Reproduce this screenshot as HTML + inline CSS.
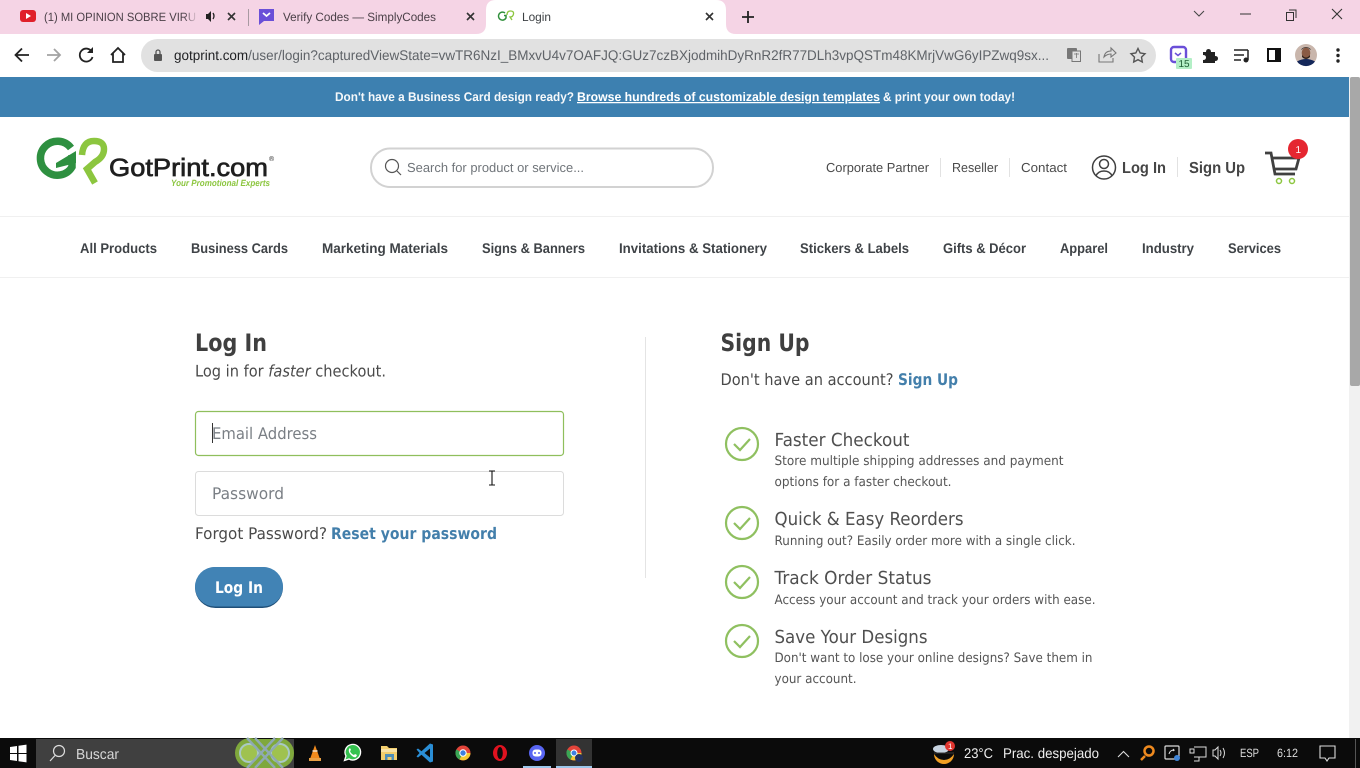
<!DOCTYPE html>
<html lang="es"><head><meta charset="utf-8"><title>Login</title>
<style>
html,body{margin:0;padding:0;width:1360px;height:768px;overflow:hidden;background:#fff}
svg{position:absolute;left:0;top:0;display:block}
text{white-space:pre}
.s{font-family:"Liberation Sans",sans-serif}
.d{font-family:"DejaVu Sans",sans-serif}
.n{font-family:"Liberation Sans",sans-serif;font-weight:700;font-size:14px;fill:#3f4347}
</style></head><body>
<svg width="1360" height="768" viewBox="0 0 1360 768" xmlns="http://www.w3.org/2000/svg" text-rendering="geometricPrecision">
<defs><linearGradient id="fade" x1="0" x2="1" y1="0" y2="0"><stop offset="0" stop-color="#f5d4e5" stop-opacity="0"/><stop offset="1" stop-color="#f5d4e5"/></linearGradient></defs>
<!-- tab strip -->
<rect width="1360" height="34" fill="#f5d4e5"/>
<path d="M476 34q10 0 10-10V10q0-10 10-10h220q10 0 10 10v14q0 10 10 10z" fill="#fff"/>
<rect x="20" y="10" width="16" height="12" rx="3" fill="#e0202a"/><path d="M26 13v6l5-3z" fill="#fff"/>
<text class="s" x="44" y="21" font-size="12" fill="#4b4048" textLength="152" lengthAdjust="spacingAndGlyphs">(1) MI OPINION SOBRE VIRU</text>
<rect x="184" y="8" width="14" height="18" fill="url(#fade)"/>
<path d="M206 14h2l3-3v11l-3-3h-2z" fill="#222"/><path d="M213 13q2 3 0 6" stroke="#222" fill="none" stroke-width="1.300"/>
<path d="M228 13l7 7m0-7l-7 7" stroke="#333" stroke-width="1.600"/>
<rect x="248" y="9" width="1" height="17" fill="#a89aa2"/>
<path d="M259 9h15v12h-10l-5 4z" fill="#6a4fd8"/><path d="M263 13l3.500 3 3.500-3" stroke="#fff" stroke-width="1.800" fill="none"/>
<text class="s" x="283" y="21" font-size="12" fill="#4b4048" textLength="153" lengthAdjust="spacingAndGlyphs">Verify Codes — SimplyCodes</text>
<path d="M467 13l7 7m0-7l-7 7" stroke="#333" stroke-width="1.600"/>
<path d="M505 13a4 4 0 1 0 1 5v-2.500h-2" stroke="#2f8f3a" stroke-width="1.500" fill="none"/><path d="M507 15q0-4 3.500-4t3 3-3.500 3l2 3" stroke="#8cc63f" stroke-width="1.300" fill="none"/>
<text class="s" x="522" y="21" font-size="12" fill="#3c4043" textLength="29" lengthAdjust="spacingAndGlyphs">Login</text>
<path d="M706 13l7 7m0-7l-7 7" stroke="#333" stroke-width="1.600"/>
<path d="M748 11v12m-6-6h12" stroke="#222" stroke-width="1.800"/>
<path d="M1194 11l5 5 5-5" stroke="#444" fill="none"/>
<path d="M1240 14h11" stroke="#333"/>
<path d="M1289 10h7v8M1286.500 12.500h7v8h-7z" stroke="#333" fill="none"/>
<path d="M1332 9l10 10m0-10l-10 10" stroke="#333" stroke-width="1.100"/>
<!-- toolbar -->
<rect y="34" width="1360" height="43" fill="#fff"/>
<path d="M29 55H16m6-6.500L15.500 55l6.500 6.500" stroke="#222" stroke-width="1.800" fill="none"/>
<path d="M47 55h13m-6-6 6 6-6 6" stroke="#a3a3a3" stroke-width="1.800" fill="none"/>
<path d="M92 52a6.500 6.500 0 1 0 .5 5" stroke="#222" stroke-width="1.800" fill="none"/><path d="M93 47v6h-6z" fill="#222"/>
<path d="M111 55l7-7 7 7m-12-1.500V62h10v-8.500" stroke="#222" stroke-width="1.800" fill="none"/>
<rect x="141" y="39" width="1015" height="33" rx="16.500" fill="#e1e1e1"/>
<rect x="154" y="54" width="8" height="7" rx="1" fill="#555"/><path d="M156 54v-2a2 2 0 0 1 4 0v2" stroke="#555" stroke-width="1.300" fill="none"/>
<text class="s" x="174" y="60" font-size="14" textLength="875" lengthAdjust="spacingAndGlyphs" fill="#5f6368"><tspan fill="#202124">gotprint.com</tspan>/user/login?capturedViewState=vwTR6NzI_BMxvU4v7OAFJQ:GUz7czBXjodmihDyRnR2fR77DLh3vpQSTm48KMrjVwG6yIPZwq9sx...</text>
<rect x="1067" y="48" width="10" height="11" rx="1" fill="#777"/><rect x="1072" y="51" width="8.500" height="10.500" fill="#e1e1e1" stroke="#777"/><path d="M1074 54h5M1076.500 53v5" stroke="#777" stroke-width=".8"/>
<path d="M1099 54v8h14v-4M1104 57q1-6 7-6v-3l5 5-5 4v-3q-4 0-7 3z" stroke="#777" fill="none" stroke-width="1.100"/>
<path d="M1138 48.500l2.200 4.500 4.800.7-3.500 3.400.8 4.900-4.300-2.300-4.300 2.300.8-4.900-3.500-3.400 4.800-.7z" stroke="#555" stroke-width="1.400" fill="none"/>
<rect x="1171" y="47" width="15" height="15" rx="3" fill="none" stroke="#6a4fd8" stroke-width="2.400"/><path d="M1175 53l3 2.500 3-2.500" stroke="#6a4fd8" stroke-width="1.500" fill="none"/>
<rect x="1176" y="58" width="16" height="11" rx="1" fill="#b3efc6"/><text class="s" x="1178.500" y="67" font-size="10" fill="#1f5e35">15</text>
<path d="M1203 52h3q0-3 2.500-3t2.500 3h4v4q3 0 3 2.500t-3 2.500v2h-12v-3q3 0 3-2.500t-3-2.500z" fill="#222"/>
<path d="M1234 50h14M1234 55h10M1234 60h7" stroke="#222" stroke-width="1.500"/><path d="M1248 50v10" stroke="#222" stroke-width="1.500"/><circle cx="1246" cy="60" r="2.500" fill="#222"/>
<rect x="1268" y="49" width="12" height="12" fill="#fff" stroke="#111" stroke-width="2"/><rect x="1275" y="49" width="6" height="13" fill="#111"/>
<circle cx="1306" cy="55" r="11" fill="#c9b6ac"/><path d="M1297 61.500q9-5 18 0a11 11 0 0 1-18 0z" fill="#14275a"/><ellipse cx="1306" cy="53" rx="4.300" ry="5.500" fill="#8a5a44"/><path d="M1301.500 50q4.500-5 9 0v-1q-4.500-4-9 0z" fill="#222"/><path d="M1302 55q4 5 8 0v2q-4 4-8 0z" fill="#33231c"/>
<circle cx="1338" cy="50" r="1.700" fill="#222"/><circle cx="1338" cy="55.500" r="1.700" fill="#222"/><circle cx="1338" cy="61" r="1.700" fill="#222"/>
<!-- banner -->
<rect y="77" width="1349" height="40" fill="#3d80b0"/>
<text class="s" x="335" y="101" font-size="12.500" fill="#fff" textLength="239" lengthAdjust="spacingAndGlyphs" font-weight="700" opacity=".95">Don't have a Business Card design ready?</text>
<text class="s" x="577" y="101" font-size="12.500" fill="#fff" textLength="303" lengthAdjust="spacingAndGlyphs" font-weight="700" text-decoration="underline">Browse hundreds of customizable design templates</text>
<text class="s" x="883" y="101" font-size="12.500" fill="#fff" textLength="132" lengthAdjust="spacingAndGlyphs" font-weight="700" opacity=".95">&amp; print your own today!</text>
<!-- logo -->
<path d="M71 148A17 17 0 1 0 72 167V155" stroke="#2e9040" stroke-width="7.500" fill="none"/>
<path d="M76 151L56 163v5l20-5z" fill="#2e9040"/>
<path d="M82 155q1-14 12-14 10 0 10 8 0 8-9 13l-8 7 8 14" stroke="#8cc63f" stroke-width="6.500" fill="none"/>
<text class="s" x="109" y="176" font-size="25" fill="#1f1f1f" stroke="#1f1f1f" stroke-width=".7" textLength="159" lengthAdjust="spacingAndGlyphs">GotPrint.com</text>
<text class="s" x="269" y="161" font-size="7" fill="#222">®</text>
<text class="s" x="171" y="186" font-size="9" font-style="italic" font-weight="700" fill="#8cc63f" textLength="99" lengthAdjust="spacingAndGlyphs">Your Promotional Experts</text>
<!-- search -->
<rect x="371" y="148.500" width="342" height="38.500" rx="19" fill="#fff" stroke="#d2d2d2" stroke-width="2"/>
<circle cx="392" cy="166" r="6.500" fill="none" stroke="#555" stroke-width="1.200"/><path d="M397 171l4 4" stroke="#555" stroke-width="1.200"/>
<text class="s" x="407" y="172" font-size="13" fill="#70757a" textLength="177" lengthAdjust="spacingAndGlyphs">Search for product or service...</text>
<text class="s" x="826" y="172" font-size="13" fill="#4a4a4a" textLength="103" lengthAdjust="spacingAndGlyphs">Corporate Partner</text>
<rect x="940" y="158" width="1" height="19" fill="#e2e2e2"/>
<text class="s" x="952" y="172" font-size="13" fill="#4a4a4a" textLength="46" lengthAdjust="spacingAndGlyphs">Reseller</text>
<rect x="1009" y="158" width="1" height="19" fill="#e2e2e2"/>
<text class="s" x="1021" y="172" font-size="13" fill="#4a4a4a" textLength="46" lengthAdjust="spacingAndGlyphs">Contact</text>
<circle cx="1104" cy="167.500" r="11.500" fill="none" stroke="#404040" stroke-width="1.500"/><circle cx="1104" cy="164" r="4.500" fill="none" stroke="#404040" stroke-width="1.500"/><path d="M1096 176q2-5 8-5t8 5" fill="none" stroke="#404040" stroke-width="1.500"/>
<text class="s" x="1122" y="173" font-size="16" font-weight="700" fill="#454545" textLength="44" lengthAdjust="spacingAndGlyphs">Log In</text>
<rect x="1177" y="157" width="1" height="20" fill="#e2e2e2"/>
<text class="s" x="1189" y="173" font-size="16" font-weight="700" fill="#454545" textLength="56" lengthAdjust="spacingAndGlyphs">Sign Up</text>
<path d="M1265 153h6l4 21h20M1273 158h26l-3 11h-21" fill="none" stroke="#404040" stroke-width="2.800"/>
<circle cx="1279" cy="181" r="2.500" fill="none" stroke="#8cc63f" stroke-width="1.500"/><circle cx="1292" cy="181" r="2.500" fill="none" stroke="#8cc63f" stroke-width="1.500"/>
<circle cx="1298" cy="149" r="10" fill="#e52630"/><text class="s" x="1295.500" y="153" font-size="10" fill="#fff">1</text>
<rect y="216" width="1349" height="1" fill="#f0f0f0"/>
<rect y="277" width="1349" height="1" fill="#f0f0f0"/>
<!-- nav -->
<text class="n" x="80" y="253" textLength="77" lengthAdjust="spacingAndGlyphs">All Products</text>
<text class="n" x="191" y="253" textLength="97" lengthAdjust="spacingAndGlyphs">Business Cards</text>
<text class="n" x="322" y="253" textLength="126" lengthAdjust="spacingAndGlyphs">Marketing Materials</text>
<text class="n" x="482" y="253" textLength="103" lengthAdjust="spacingAndGlyphs">Signs &amp; Banners</text>
<text class="n" x="619" y="253" textLength="148" lengthAdjust="spacingAndGlyphs">Invitations &amp; Stationery</text>
<text class="n" x="800" y="253" textLength="109" lengthAdjust="spacingAndGlyphs">Stickers &amp; Labels</text>
<text class="n" x="943" y="253" textLength="83" lengthAdjust="spacingAndGlyphs">Gifts &amp; Décor</text>
<text class="n" x="1060" y="253" textLength="48" lengthAdjust="spacingAndGlyphs">Apparel</text>
<text class="n" x="1142" y="253" textLength="52" lengthAdjust="spacingAndGlyphs">Industry</text>
<text class="n" x="1228" y="253" textLength="53" lengthAdjust="spacingAndGlyphs">Services</text>
<!-- login column -->
<text class="d" x="195" y="351" font-size="24" font-weight="700" fill="#3f3f3f" textLength="72" lengthAdjust="spacingAndGlyphs">Log In</text>
<text class="d" x="195" y="376.500" font-size="16" fill="#4a4a4a" textLength="191" lengthAdjust="spacingAndGlyphs">Log in for <tspan font-style="italic">faster</tspan> checkout.</text>
<rect x="195.500" y="411.500" width="368" height="44" rx="3" fill="#fff" stroke="#8fbf5c" stroke-width="1.200"/>
<rect x="212" y="423" width="1" height="20" fill="#333"/>
<text class="d" x="212" y="439" font-size="16" fill="#7a7f85" textLength="105" lengthAdjust="spacingAndGlyphs">Email Address</text>
<rect x="195.500" y="471.500" width="368" height="44" rx="3" fill="#fff" stroke="#dcdcdc"/>
<text class="d" x="212" y="499" font-size="16" fill="#7a7f85" textLength="72" lengthAdjust="spacingAndGlyphs">Password</text>
<path d="M489 471h6M489 485h6M492 471v14" stroke="#111" stroke-width="1.100"/>
<text class="d" x="195" y="539" font-size="16" fill="#4a4a4a" textLength="132" lengthAdjust="spacingAndGlyphs">Forgot Password?</text>
<text class="d" x="331" y="539" font-size="16" font-weight="700" fill="#437fab" textLength="166" lengthAdjust="spacingAndGlyphs">Reset your password</text>
<rect x="195" y="567" width="88" height="41" rx="20.500" fill="#1f4f78"/>
<rect x="195" y="567" width="88" height="39.500" rx="19.700" fill="#4183b5"/>
<text class="d" x="215" y="593" font-size="16" font-weight="700" fill="#fff" textLength="48" lengthAdjust="spacingAndGlyphs">Log In</text>
<rect x="645" y="337" width="1" height="241" fill="#e4e4e4"/>
<!-- signup column -->
<text class="d" x="720.500" y="351" font-size="24" font-weight="700" fill="#3f3f3f" textLength="89" lengthAdjust="spacingAndGlyphs">Sign Up</text>
<text class="d" x="720.500" y="385" font-size="16" fill="#4a4a4a" textLength="173" lengthAdjust="spacingAndGlyphs">Don't have an account?</text>
<text class="d" x="898" y="385" font-size="16" font-weight="700" fill="#437fab" textLength="60" lengthAdjust="spacingAndGlyphs">Sign Up</text>
<g fill="none" stroke="#8fc060" stroke-width="2.200">
<circle cx="742" cy="444" r="16"/><path d="M734 444l6 6 10-11"/>
<circle cx="742" cy="523" r="16"/><path d="M734 523l6 6 10-11"/>
<circle cx="742" cy="582" r="16"/><path d="M734 582l6 6 10-11"/>
<circle cx="742" cy="641" r="16"/><path d="M734 641l6 6 10-11"/>
</g>
<text class="d" x="774.500" y="446" font-size="18" fill="#4f4f4f" textLength="135" lengthAdjust="spacingAndGlyphs">Faster Checkout</text>
<text class="d" x="774.500" y="465" font-size="13" fill="#555" textLength="289" lengthAdjust="spacingAndGlyphs">Store multiple shipping addresses and payment</text>
<text class="d" x="774.500" y="486" font-size="13" fill="#555" textLength="177" lengthAdjust="spacingAndGlyphs">options for a faster checkout.</text>
<text class="d" x="774.500" y="525" font-size="18" fill="#4f4f4f" textLength="189" lengthAdjust="spacingAndGlyphs">Quick &amp; Easy Reorders</text>
<text class="d" x="774.500" y="545" font-size="13" fill="#555" textLength="301" lengthAdjust="spacingAndGlyphs">Running out? Easily order more with a single click.</text>
<text class="d" x="774.500" y="584" font-size="18" fill="#4f4f4f" textLength="157" lengthAdjust="spacingAndGlyphs">Track Order Status</text>
<text class="d" x="774.500" y="604" font-size="13" fill="#555" textLength="321" lengthAdjust="spacingAndGlyphs">Access your account and track your orders with ease.</text>
<text class="d" x="774.500" y="643" font-size="18" fill="#4f4f4f" textLength="153" lengthAdjust="spacingAndGlyphs">Save Your Designs</text>
<text class="d" x="774.500" y="662" font-size="13" fill="#555" textLength="318" lengthAdjust="spacingAndGlyphs">Don't want to lose your online designs? Save them in</text>
<text class="d" x="774.500" y="683" font-size="13" fill="#555" textLength="82" lengthAdjust="spacingAndGlyphs">your account.</text>
<!-- scrollbar -->
<rect x="1349" y="77" width="11" height="661" fill="#f1f1f1"/>
<rect x="1350" y="77" width="10" height="309" rx="2" fill="#a8a8a8"/>
<!-- taskbar -->
<rect y="738" width="1360" height="30" fill="#0b0b0b"/>
<path d="M10 747l7-1v7h-7zM18.500 745.800l8-1.200v8.400h-8zM10 754h7v7l-7-1zM18.500 754h8v8.400l-8-1.200z" fill="#fff"/>
<rect x="36" y="739" width="258" height="29" fill="#404040"/>
<circle cx="59" cy="751" r="5.500" fill="none" stroke="#ddd" stroke-width="1.200"/><path d="M55 755.500l-5 5.500" stroke="#ddd" stroke-width="1.200"/>
<text class="s" x="76" y="759" font-size="14.500" fill="#d6d6d6" textLength="43" lengthAdjust="spacingAndGlyphs">Buscar</text>
<circle cx="250" cy="753" r="15" fill="#7fa83c"/><circle cx="279" cy="753" r="15" fill="#7fa83c"/><rect x="250" y="739" width="29" height="29" fill="#7fa83c"/>
<circle cx="249" cy="753" r="9" fill="#9fc24f" stroke="#a9c9c4" stroke-width="2"/><circle cx="280" cy="753" r="9" fill="#9fc24f" stroke="#a9c9c4" stroke-width="2"/>
<path d="M247 768l28-30M255 768l28-30M247 738l28 30M255 738l28 30" stroke="#8fa9b3" stroke-width="2.400" fill="none"/>
<rect x="294" y="739" width="2" height="29" fill="#0b0b0b"/>
<path d="M315 745l5 14h-10z" fill="#f08a1d"/><rect x="309" y="758" width="12" height="3" fill="#e9a045"/><path d="M312.500 751h5" stroke="#f5e3c8" stroke-width="1.500"/>
<path d="M344.500 760.500l1.500-4.500a7.800 7.800 0 1 1 3 3z" fill="#35c24f" stroke="#fff" stroke-width="1.300"/><path d="M349 749q-1 3 2 6t5 2l1-2-2-1-1 1q-3-1-4-4l1-1-1-2z" fill="#fff"/>
<path d="M381 746h6l2 2h8v12h-16z" fill="#f3cf6e"/><rect x="381" y="749" width="16" height="3" fill="#f9e3a6"/><path d="M385 760v-6h9v6h-2.500v-3h-4v3z" fill="#4f8fb8"/>
<path d="M433 744.500l-3-1-8.500 7.800-3.500-2.800-1.500 1 3 3.500-3 3.500 1.500 1 3.500-2.800 8.500 7.800 3-1zM430 748.500v9l-5.500-4.500z" fill="#2a8ed6" fill-rule="evenodd"/>
<circle cx="463" cy="753" r="7.500" fill="#e3443a"/><path d="M463 753l7.500 0a7.500 7.500 0 0 1-11 6.500z" fill="#f5c932"/><path d="M463 753l-3.700 6.500a7.500 7.500 0 0 1-3-10z" fill="#3aa655"/><circle cx="463" cy="753" r="3.200" fill="#3f7fe0" stroke="#fff"/>
<ellipse cx="500" cy="753" rx="7" ry="8" fill="#e0121f"/><ellipse cx="500" cy="753" rx="2.800" ry="6" fill="#0b0b0b"/>
<circle cx="537" cy="753" r="8" fill="#5865f2"/><rect x="532.500" y="749.500" width="9" height="7" rx="3" fill="#fff"/><circle cx="535" cy="753" r="1" fill="#5865f2"/><circle cx="539" cy="753" r="1" fill="#5865f2"/>
<rect x="523" y="766" width="28" height="2" fill="#9cc7ea"/>
<rect x="556" y="739" width="36" height="29" fill="#333"/><rect x="556" y="766" width="36" height="2" fill="#9cc7ea"/>
<circle cx="574" cy="753" r="7.500" fill="#e3443a"/><path d="M574 753l7.500 0a7.500 7.500 0 0 1-11 6.500z" fill="#f5c932"/><path d="M574 753l-3.700 6.500a7.500 7.500 0 0 1-3-10z" fill="#3aa655"/><circle cx="574" cy="753" r="3" fill="#3f7fe0" stroke="#fff"/><circle cx="579" cy="758" r="4" fill="#26345f"/>
<path d="M934 754a10 10 0 0 0 20 0q-4 6-10 6t-10-6z" fill="#f2a023"/><ellipse cx="941" cy="749" rx="8" ry="4" fill="#c7d3e0"/><path d="M934 753h20" stroke="#3a3a3a"/>
<circle cx="950" cy="746" r="5" fill="#e0352f"/><text class="s" x="948" y="749" font-size="8" fill="#fff">1</text>
<text class="s" x="964" y="758" font-size="14" fill="#eee" textLength="29" lengthAdjust="spacingAndGlyphs">23°C</text>
<text class="s" x="1003" y="758" font-size="14" fill="#eee" textLength="96" lengthAdjust="spacingAndGlyphs">Prac. despejado</text>
<path d="M1118 757l5.500-5.500 5.500 5.500" stroke="#ddd" stroke-width="1.100" fill="none"/>
<circle cx="1149" cy="751" r="4.500" fill="none" stroke="#ef8a1f" stroke-width="2.500"/><path d="M1145 756l-4 4" stroke="#ef8a1f" stroke-width="2.500"/>
<rect x="1165" y="746" width="14" height="13" rx="1" fill="none" stroke="#ddd" stroke-width="1.200"/><path d="M1169 754q1-4 5-4l-1-1m1 1-1 1" stroke="#ddd" fill="none"/><circle cx="1177" cy="758" r="3" fill="#3f85d8"/>
<path d="M1190 749h4v4h-4zM1194 747h12v10h-12M1199 757v4h-5" stroke="#ddd" fill="none"/>
<path d="M1213 750h2l3-3v12l-3-3h-2zM1220 750q2 3 0 6M1223 748q3 5 0 10" stroke="#ddd" fill="none"/>
<text class="s" x="1240" y="757" font-size="12" fill="#ddd" textLength="19" lengthAdjust="spacingAndGlyphs">ESP</text>
<text class="s" x="1277" y="757" font-size="12" fill="#ddd" textLength="21" lengthAdjust="spacingAndGlyphs">6:12</text>
<path d="M1320 746h15v12h-6l-2 3-2-3h-5z" fill="none" stroke="#ddd" stroke-width="1.100"/>
<rect x="1355" y="739" width="1" height="29" fill="#555"/>
</svg>
</body></html>
